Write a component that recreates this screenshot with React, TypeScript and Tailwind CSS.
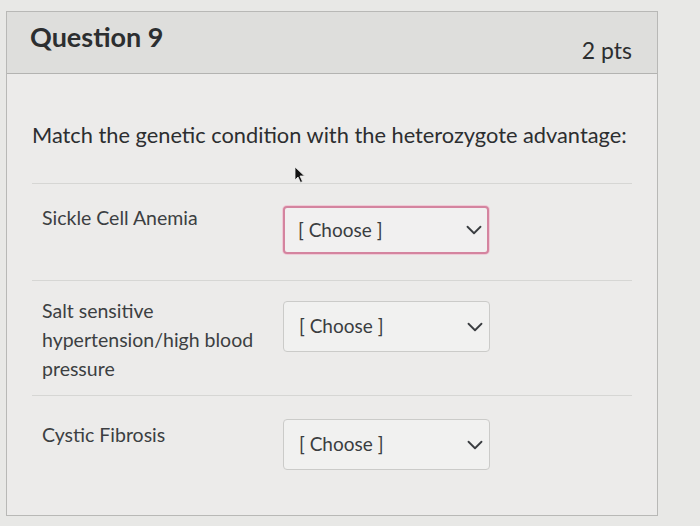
import { ChevronDown } from 'lucide-react'

type Row = {
  label: string[]
  focused?: boolean
  rowClass: string
  selectClass: string
}

const rows: Row[] = [
  {
    label: ['Sickle Cell Anemia'],
    focused: true,
    rowClass: 'pt-[19px] h-[97px]',
    selectClass: 'pt-[3px]',
  },
  {
    label: ['Salt sensitive', 'hypertension/high blood', 'pressure'],
    rowClass: 'pt-[15px] h-[115px]',
    selectClass: 'pt-[5px]',
  },
  { label: ['Cystic Fibrosis'], rowClass: 'pt-[24px] h-[110px]', selectClass: 'pt-0 -mt-[1px]' },
]

function Select({ focused }: { focused?: boolean }) {
  return (
    <div
      className={
        focused
          ? 'flex h-[48px] w-[206px] items-center justify-between rounded-[4px] border-2 border-[#d4849f] bg-[#f1f0f0] pl-[13px] pr-0 shadow-[0_0_0_1px_#efcbd7]'
          : 'flex h-[51px] w-[207px] items-center justify-between rounded-[4px] border border-[#cbcbc9] bg-[#f1f1f0] pl-[15px] pr-[1px]'
      }
    >
      <span className="text-[19px] text-[#3a3d40]">[ Choose ]</span>
      <ChevronDown className="size-[26px] text-[#3a3d40]" strokeWidth={1.7} />
    </div>
  )
}

export default function App() {
  return (
    <div
      className="min-h-[526px] w-[700px] bg-[#e8e8e6] pl-[6px] pt-[11px]"
      style={{ fontFamily: 'Lato, "Open Sans", sans-serif' }}
    >
      <div className="relative h-[505px] w-[652px] border border-[#b8b8b6] bg-[#ecebea]">
        <div className="flex h-[62px] justify-between border-b border-[#b3b3b1] bg-[#dededc] pl-[23px] pr-[25px]">
          <div className="pt-[8px] text-[27px] font-bold leading-[34px] text-[#2c2e30]">
            Question 9
          </div>
          <div className="pt-[23px] text-[23px] leading-[30px] text-[#2c2e30]">
            2 pts
          </div>
        </div>

        <div className="px-[25px]">
          <p className="pt-[47px] text-[21.8px] leading-[28px] text-[#2c2e30]">
            Match the genetic condition with the heterozygote advantage:
          </p>

          <div className="mt-[34px] w-[600px] border-b border-[#d6d6d4]" />

          {rows.map((row, i) => (
            <div
              key={i}
              className={`flex ${row.rowClass} ${
                i < rows.length - 1 ? 'border-b border-[#d6d6d4]' : ''
              }`}
            >
              <div className="w-[251px] pl-[10px] text-[19.5px] leading-[29px] text-[#3c3f42]">
                {row.label.map((l) => (
                  <div key={l}>{l}</div>
                ))}
              </div>
              <div className={row.selectClass}>
                <Select focused={row.focused} />
              </div>
            </div>
          ))}
        </div>

        <svg
          className="absolute left-[287px] top-[154px]"
          width="12"
          height="18"
          viewBox="0 0 12 18"
        >
          <path
            d="M1 1 L1 14 L4 11 L6.5 16.5 L8.5 15.5 L6 10 L10.5 10 Z"
            fill="#111"
            stroke="#eee"
            strokeWidth="0.8"
          />
        </svg>
      </div>
    </div>
  )
}
